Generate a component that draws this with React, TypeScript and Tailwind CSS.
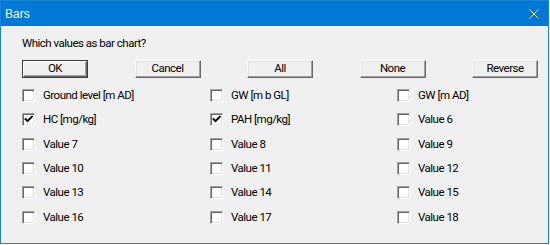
import React from "react";

const uiFont = { fontFamily: 'Roboto, "Liberation Sans", Arial, sans-serif' };
const titleFont = { fontFamily: '"Liberation Sans", Arial, sans-serif' };

const items: { label: string; checked?: boolean }[] = [
  { label: "Ground level [m AD]" },
  { label: "GW [m b GL]" },
  { label: "GW [m AD]" },
  { label: "HC [mg/kg]", checked: true },
  { label: "PAH [mg/kg]", checked: true },
  { label: "Value 6" },
  { label: "Value 7" },
  { label: "Value 8" },
  { label: "Value 9" },
  { label: "Value 10" },
  { label: "Value 11" },
  { label: "Value 12" },
  { label: "Value 13" },
  { label: "Value 14" },
  { label: "Value 15" },
  { label: "Value 16" },
  { label: "Value 17" },
  { label: "Value 18" },
];

function Button({ label, isDefault }: { label: string; isDefault?: boolean }) {
  if (isDefault) {
    return (
      <button className="h-[18px] w-[66px] border border-[#3c3c3c] bg-[#f0f0f0] p-0 text-[11.5px] leading-none tracking-[-0.5px] text-black">
        <span className="flex h-full w-full items-center justify-center border-t border-l border-t-white border-l-white border-b border-r border-b-[#696969] border-r-[#696969] shadow-[inset_-1px_-1px_0_#a0a0a0]">
          {label}
        </span>
      </button>
    );
  }
  return (
    <button className="flex h-[18px] w-[66px] items-center justify-center border-t border-l border-t-white border-l-white border-b border-r border-b-[#696969] border-r-[#696969] bg-[#f0f0f0] p-0 text-[11.5px] leading-none tracking-[-0.5px] text-black shadow-[inset_-1px_-1px_0_#a0a0a0,inset_1px_1px_0_#e3e3e3]">
      {label}
    </button>
  );
}

function CheckBox({ checked }: { checked?: boolean }) {
  return (
    <span className="relative block h-[13px] w-[13px] shrink-0 border-t border-l border-t-[#a0a0a0] border-l-[#a0a0a0] border-b border-r border-b-white border-r-white bg-white shadow-[inset_1px_1px_0_#696969,inset_-1px_-1px_0_#e3e3e3]">
      {checked && (
        <svg className="absolute left-0 top-0" width="11" height="11" viewBox="0 0 11 11">
          <path d="M2.5 5 L4.5 7.2 L8.8 2.8" fill="none" stroke="#000" strokeWidth="1.9" strokeLinecap="square" />
        </svg>
      )}
    </span>
  );
}

export default function App() {
  return (
    <div className="h-[245px] w-[550px] bg-white" style={uiFont}>
      <div className="flex h-[244px] w-[549px] flex-col border border-[#1883d7] bg-[#f0f0f0]">
        <div className="flex h-[25px] shrink-0 items-center justify-between bg-[#0078d7] pl-[4px] pr-[8px]">
          <span className="text-[12px] text-white" style={titleFont}>Bars</span>
          <svg width="10" height="10" viewBox="0 0 10 10" className="mr-[1px]">
            <path d="M0.5 0.5 L9.5 9.5 M9.5 0.5 L0.5 9.5" stroke="#fff" strokeWidth="1" />
          </svg>
        </div>
        <div className="flex flex-col pl-[21px] text-[11.5px] tracking-[-0.5px] text-black">
          <div className="mt-[11px] leading-[13px]">Which values as bar chart?</div>
          <div className="mt-[10px] flex gap-[46.5px]">
            <Button label="OK" isDefault />
            <Button label="Cancel" />
            <Button label="All" />
            <Button label="None" />
            <Button label="Reverse" />
          </div>
          <div className="mt-[5.5px] grid auto-rows-[24.3px] grid-cols-[188px_187px_auto]">
            {items.map((it) => (
              <div key={it.label} className="flex items-center gap-[8px]">
                <CheckBox checked={it.checked} />
                <span className="leading-[13px]">{it.label}</span>
              </div>
            ))}
          </div>
        </div>
      </div>
    </div>
  );
}
